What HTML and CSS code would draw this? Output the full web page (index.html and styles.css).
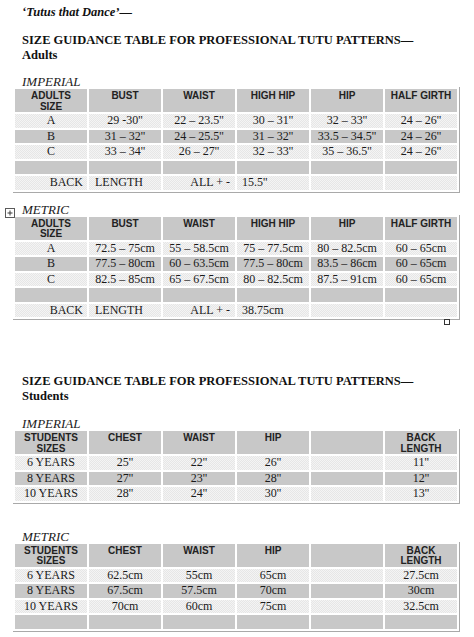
FILE: index.html
```html
<!DOCTYPE html>
<html>
<head>
<meta charset="utf-8">
<link rel="stylesheet" href="styles.css">
</head>
<body>
<div class="page">
  <p class="doc-title">‘Tutus that Dance’—</p>

  <h2 class="heading">SIZE GUIDANCE TABLE FOR PROFESSIONAL TUTU PATTERNS—<br>Adults</h2>

  <p class="caption gap-a1">IMPERIAL</p>
  <table class="size-table">
    <colgroup><col><col><col><col><col><col></colgroup>
    <tr class="hd"><th>ADULTS<br>SIZE</th><th>BUST</th><th>WAIST</th><th>HIGH HIP</th><th>HIP</th><th>HALF GIRTH</th></tr>
    <tr class="lt"><td>A</td><td>29 -30''</td><td>22 – 23.5''</td><td>30 – 31''</td><td>32 – 33''</td><td>24 – 26''</td></tr>
    <tr class="dk"><td>B</td><td>31 – 32''</td><td>24 – 25.5''</td><td>31 – 32''</td><td>33.5 – 34.5''</td><td>24 – 26''</td></tr>
    <tr class="lt"><td>C</td><td>33 – 34''</td><td>26 – 27''</td><td>32 – 33''</td><td>35 – 36.5''</td><td>24 – 26''</td></tr>
    <tr class="dk"><td></td><td></td><td></td><td></td><td></td><td></td></tr>
    <tr class="lt"><td class="r">BACK</td><td class="l">LENGTH</td><td class="r">ALL + -</td><td class="l">15.5''</td><td></td><td></td></tr>
  </table>

  <div class="caption handle-row gap-a2">
    <svg class="move-handle" width="10" height="10" viewBox="0 0 10 10"><rect x="0.5" y="0.5" width="9" height="9" fill="#fff" stroke="#5a5a5a"/><path d="M2.5 5h5M5 2.5v5" stroke="#3a3a3a" stroke-width="1"/></svg>
    <span>METRIC</span>
  </div>
  <div class="table-wrap">
    <table class="size-table">
      <colgroup><col><col><col><col><col><col></colgroup>
      <tr class="hd"><th>ADULTS<br>SIZE</th><th>BUST</th><th>WAIST</th><th>HIGH HIP</th><th>HIP</th><th>HALF GIRTH</th></tr>
      <tr class="lt"><td>A</td><td>72.5 – 75cm</td><td>55 – 58.5cm</td><td>75 – 77.5cm</td><td>80 – 82.5cm</td><td>60 – 65cm</td></tr>
      <tr class="dk"><td>B</td><td>77.5 – 80cm</td><td>60 – 63.5cm</td><td>77.5 – 80cm</td><td>83.5 – 86cm</td><td>60 – 65cm</td></tr>
      <tr class="lt"><td>C</td><td>82.5 – 85cm</td><td>65 – 67.5cm</td><td>80 – 82.5cm</td><td>87.5 – 91cm</td><td>60 – 65cm</td></tr>
      <tr class="dk"><td></td><td></td><td></td><td></td><td></td><td></td></tr>
      <tr class="lt"><td class="r">BACK</td><td class="l">LENGTH</td><td class="r">ALL + -</td><td class="l">38.75cm</td><td></td><td></td></tr>
    </table>
    <span class="resize-handle"></span>
  </div>

  <h2 class="heading gap-s">SIZE GUIDANCE TABLE FOR PROFESSIONAL TUTU PATTERNS—<br>Students</h2>

  <p class="caption gap-s1">IMPERIAL</p>
  <table class="size-table">
    <colgroup><col><col><col><col><col><col></colgroup>
    <tr class="hd"><th>STUDENTS<br>SIZES</th><th>CHEST</th><th>WAIST</th><th>HIP</th><th></th><th>BACK<br>LENGTH</th></tr>
    <tr class="lt"><td>6 YEARS</td><td>25''</td><td>22''</td><td>26''</td><td></td><td>11''</td></tr>
    <tr class="dk"><td>8 YEARS</td><td>27''</td><td>23''</td><td>28''</td><td></td><td>12''</td></tr>
    <tr class="lt"><td>10 YEARS</td><td>28''</td><td>24''</td><td>30''</td><td></td><td>13''</td></tr>
  </table>

  <p class="caption gap-s2">METRIC</p>
  <table class="size-table">
    <colgroup><col><col><col><col><col><col></colgroup>
    <tr class="hd"><th>STUDENTS<br>SIZES</th><th>CHEST</th><th>WAIST</th><th>HIP</th><th></th><th>BACK<br>LENGTH</th></tr>
    <tr class="lt"><td>6 YEARS</td><td>62.5cm</td><td>55cm</td><td>65cm</td><td></td><td>27.5cm</td></tr>
    <tr class="dk"><td>8 YEARS</td><td>67.5cm</td><td>57.5cm</td><td>70cm</td><td></td><td>30cm</td></tr>
    <tr class="lt"><td>10 YEARS</td><td>70cm</td><td>60cm</td><td>75cm</td><td></td><td>32.5cm</td></tr>
    <tr class="dk"><td></td><td></td><td></td><td></td><td></td><td></td></tr>
  </table>
</div>
</body>
</html>
```

FILE: styles.css
```css
html, body {
  margin: 0;
  padding: 0;
  background: #ffffff;
}

body {
  font-family: "Liberation Serif", "Times New Roman", serif;
  color: #111111;
}

.page {
  width: 474px;
  height: 637px;
  overflow: hidden;
}

.doc-title {
  margin: 5px 0 0 22px;
  font-size: 12.5px;
  line-height: 15px;
  font-weight: bold;
  font-style: italic;
}

.heading {
  margin: 13px 0 0 22px;
  font-size: 12.5px;
  line-height: 15px;
  font-weight: bold;
}

.caption {
  margin: 0 0 0 22px;
  font-size: 13px;
  line-height: 10px;
  font-style: italic;
  color: #1a1a1a;
}

.gap-a1 { margin-top: 14px; }
.gap-a2 { margin-top: 12px; }
.gap-s { margin-top: 54px; }
.gap-s1 { margin-top: 15px; }
.gap-s2 { margin-top: 28px; }

.handle-row {
  display: flex;
  align-items: flex-end;
  margin-left: 5px;
  gap: 7px;
}

.move-handle {
  display: block;
  margin-bottom: -3px;
}

.table-wrap {
  position: relative;
}

.resize-handle {
  position: absolute;
  left: 444px;
  top: 104px;
  width: 4px;
  height: 4px;
  border: 1px solid #333333;
  background: #ffffff;
}

.size-table {
  margin-left: 13px;
  border-collapse: separate;
  border-spacing: 2px;
  table-layout: fixed;
  width: 447px;
  border-style: solid;
  border-width: 0 1px 1px 0;
  border-color: #a9a9a9;
}

.size-table col {
  width: 72px;
}

.size-table th,
.size-table td {
  padding: 0;
  text-align: center;
  overflow: hidden;
  white-space: nowrap;
}

.size-table th {
  height: 23px;
  vertical-align: top;
  padding-top: 2px;
  box-sizing: border-box;
  font-family: "Liberation Sans", Arial, sans-serif;
  font-weight: bold;
  font-size: 10px;
  line-height: 10.5px;
  color: #222222;
  background: #c8c8c8;
}

.size-table td {
  height: 13.5px;
  vertical-align: middle;
  font-size: 12px;
  line-height: 13px;
  color: #1a1a1a;
}

.size-table tr.dk td {
  background: #c8c8c8;
}

.size-table tr.lt td {
  background: repeating-conic-gradient(#f4f4f4 0 25%, #e6e6e6 0 50%) 0 0 / 2px 2px;
}

.size-table td.r {
  text-align: right;
  padding-right: 4px;
}

.size-table td.l {
  text-align: left;
  padding-left: 6px;
}

.size-table td.l + td.r {
  padding-right: 5px;
}

.size-table td.r + td.l {
  padding-left: 5px;
}

.size-table td.r:first-child + td.l {
  padding-left: 6px;
}
```
